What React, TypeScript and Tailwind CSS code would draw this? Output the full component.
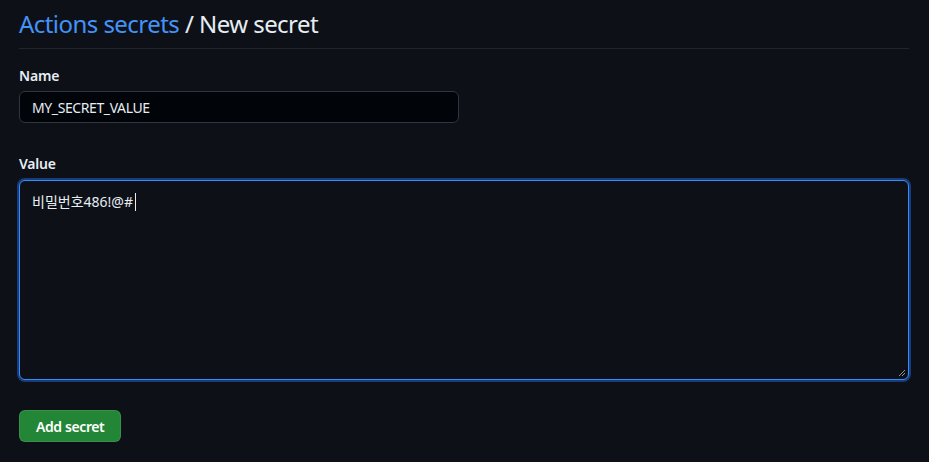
export default function App() {
  const font = { fontFamily: '"Noto Sans", "Noto Sans CJK KR", sans-serif' };
  return (
    <div className="min-h-screen w-full bg-[#0d1117] pl-[19px] pr-[20px] text-[#e6edf3]" style={font}>
      {/* Page heading */}
      <div className="border-b border-[#21262d] pt-[6px] pb-[6px]">
        <h2 className="text-[24px] leading-[36px] font-normal tracking-[-0.55px]">
          <a className="text-[#4493f8]">Actions secrets</a>
          <span> / New secret</span>
        </h2>
      </div>

      {/* Name field */}
      <div className="mt-[16px]">
        <label className="block text-[14px] leading-[21px] font-semibold tracking-[-0.2px] text-[#e6edf3]">Name</label>
        <div className="mt-[5px] flex h-[32px] w-[440px] items-center rounded-[6px] border border-[#30363d] bg-[#010409] px-[12px] text-[14px] tracking-[-0.4px] text-[#e6edf3]">
          MY_SECRET_VALUE
        </div>
      </div>

      {/* Value field */}
      <div className="mt-[30px]">
        <label className="block text-[14px] leading-[21px] font-semibold tracking-[-0.2px] text-[#e6edf3]">Value</label>
        <div className="relative mt-[6px] h-[200px] w-full rounded-[6px] border border-[#388bfd] bg-[#0d1117] px-[12px] pt-[8px] text-[14px] leading-[20px] text-[#e6edf3] shadow-[0_0_0_2px_#173c7a]">
          <span>비밀번호486!@#</span>
          <span className="ml-[2px] inline-block h-[18px] w-px translate-y-[4px] bg-[#e6edf3]" />
          <svg className="absolute right-[2px] bottom-[2px]" width="9" height="9" viewBox="0 0 9 9">
            <path d="M8 2 L2 8 M8 5 L5 8" stroke="#8b949e" strokeWidth="1" />
          </svg>
        </div>
      </div>

      {/* Submit */}
      <div className="mt-[30px]">
        <button className="h-[32px] rounded-[6px] border border-[rgba(240,246,252,0.1)] bg-[#238636] px-[16px] text-[14px] font-semibold tracking-[-0.4px] text-white">
          Add secret
        </button>
      </div>
    </div>
  );
}
